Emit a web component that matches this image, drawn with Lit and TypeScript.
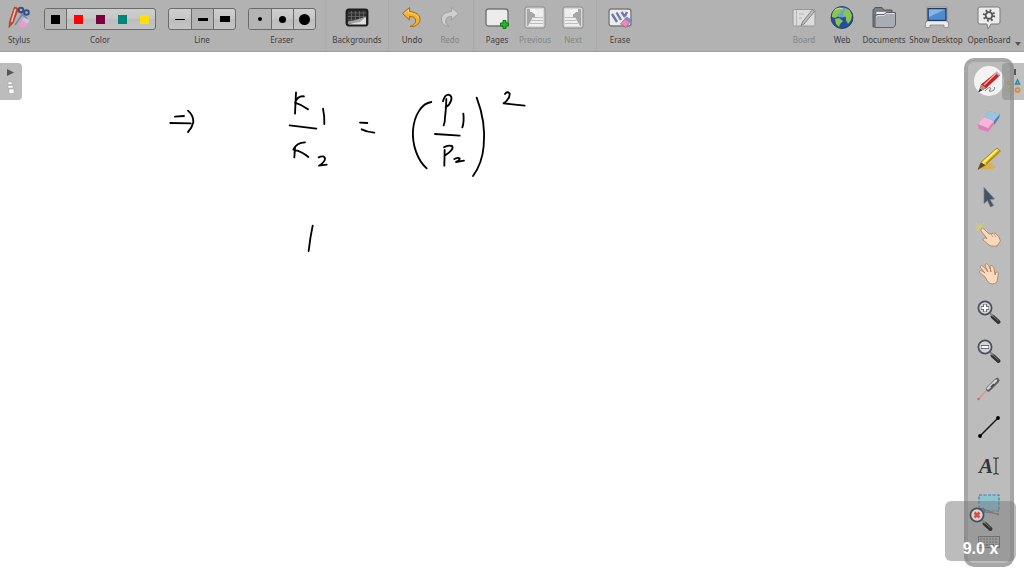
import { LitElement, html, svg, css, TemplateResult, SVGTemplateResult } from "lit";
import { customElement, property, state } from "lit/decorators.js";
import { classMap } from "lit/directives/class-map.js";
import { styleMap } from "lit/directives/style-map.js";

const pageThumb = svg`
  <rect x="2" y="1" width="20" height="21" rx="2" fill="#d8d8d8" stroke="#8a8a8a"/>
  <rect x="4" y="3" width="16" height="17" fill="#a6a6a6"/>
  <path d="M14 3H20V20H5L10 11H12V8L15 7Z" fill="#eee"/>
  <path d="M7 3H13Q17 4 14 8L11 8L9 6H7Z" fill="#f4f4f4"/>
  <path d="M10 11.500H20M8.500 14.500H20M7 17.500H20" stroke="#bcbcbc" fill="none"/>`;

const magnifier = svg`
  <path d="M15.500 16.500L21.500 22" stroke="#333" stroke-width="4" stroke-linecap="round"/>
  <path d="M13 13L16 16" stroke="#888" stroke-width="2"/>
  <path d="M15.500 15.500L21.500 21" stroke="#777"/>
  <circle cx="8" cy="8" r="6.600" fill="#d3d6d8" stroke="#4a5058" stroke-width="1.800"/>`;

const icons: Record<string, SVGTemplateResult> = {
  stylus: svg`
    <path d="M8 19L17 6M20 13L12 5" stroke="#7d8aa0" stroke-width="1.800"/>
    <circle cx="14" cy="4" r="2.300" fill="none" stroke="#34508a" stroke-width="1.900"/>
    <circle cx="19.500" cy="6.500" r="2.300" fill="none" stroke="#34508a" stroke-width="1.900"/>
    <path d="M7.500 1L11.500 2.500L6 17L2 21.500L2.500 15.500Z" fill="#d6452d" stroke="#7c3027" stroke-width=".6"/>
    <path d="M8.500 3L4.500 16" stroke="#ffc7b4" stroke-width="1.400"/>
    <path d="M12 18L17 11.500L22.500 14.500L18 21.500L13 21Z" fill="#ef9ccb"/>
    <path d="M15 14L17 11.500L22.500 14.500L20.500 17.500Z" fill="#bccbee"/>`,
  backgrounds: svg`
    <rect x="1.500" y="3.500" width="21" height="16" rx="2" fill="#303030" stroke="#1c1c1c" stroke-width="1.800"/>
    <path d="M3 7H21M3 10.500H21M3 14H21M6.500 5V18M10.500 5V18M14.500 5V18M18.500 5V18" stroke="#696969" stroke-width=".8"/>
    <path d="M3 18.500C9 17 16 14 21 11V18.500Z" fill="#dedede"/>
    <path d="M3 15.500C10 15 15 12.500 21 10.500L15 16L3 18Z" fill="#a3a3a3"/>`,
  undo: svg`<path d="M2.500 7.500L9.500 1.500V5.500C16 6 20.500 9 20 14C19.500 18.500 15 21 10 20.500C14 19 16 17 15.500 14C15 11 12.500 10.500 9.500 10.500V14Z" fill="#f5b22e" stroke="#a86c0d" stroke-linejoin="round"/>
    <path d="M4.500 7.500L8.500 4V6.700C13 7 17 8.500 18 12" fill="none" stroke="#ffd877"/>`,
  redo: svg`<path d="M20.500 7.500L13.500 1.500V5.500C7 6 3 9 3.500 14C4 18.500 7 20 11 20.500C8 18.500 7.500 17 8 14C8.500 11 11 10.500 13.500 10.500V14Z" fill="#cecece" stroke="#9e9e9e" stroke-linejoin="round"/>`,
  pages: svg`
    <rect x="1" y="3" width="22" height="17" rx="2.500" fill="#ececec" stroke="#747474" stroke-width="1.400"/>
    <path d="M17 14.500H20V17H22.500V20H20V22.500H17V20H14.500V17H17Z" transform="translate(1)" fill="#21bd20" stroke="#087b0b"/>`,
  previous: pageThumb,
  next: svg`<g transform="translate(24 0) scale(-1 1)">${pageThumb}</g>`,
  erase: svg`
    <rect x="1" y="3" width="22" height="17" rx="2.500" fill="#ededee" stroke="#7a7a7a" stroke-width="1.400"/>
    <path d="M4 8L9 16M8.500 6.500L13 14M13.500 6L17 11M19 6L17 10" fill="none" stroke="#6b7ba6" stroke-width="2.400"/>
    <path d="M12.500 18L18.500 11L23.500 14L18 21.500Z" fill="#ee88b8" stroke="#99607f" stroke-width=".7"/>
    <path d="M16.500 13.300L18.500 11L23.500 14L21.500 16.800Z" fill="#7790cf"/>`,
  board: svg`
    <rect x="1" y="3.500" width="22" height="16.500" rx="1.500" fill="#dcdcdc" stroke="#969696"/>
    <path d="M4.500 4V20M7 8H12M7 12H10" stroke="#b4b4b4"/>
    <path d="M20.500 3.500L22.500 5.500L12 18L9 19.500L10.500 16Z" fill="#bcbcbc" stroke="#858585"/>`,
  web: svg`
    <circle cx="12" cy="11.500" r="11" fill="#23509c" stroke="#22375b" stroke-width=".8"/>
    <ellipse cx="12" cy="6.500" rx="8.500" ry="5" fill="#6a9fd8"/>
    <path d="M2 9C3 4 7 1 11 2L13 4L10 5L11 7L8 8L7 11L5 12L2 11ZM15 3L19 4L22 9L21 14L18 18L16 14L16 11L13 9L14 6ZM5 13L9 12L13 15L10 18L9 21L6 18Z" fill="#8fc44a"/>
    <path d="M5 4C8 2 11 2 13 3" fill="none" stroke="#c5e69a"/>`,
  documents: svg`
    <path d="M1 21V4L3 1.500H10L12 4H20V19Z" fill="#777b82" stroke="#55585d"/>
    <path d="M4 5.500H18V18H4Z" fill="#eee" stroke="#777" stroke-width=".7"/>
    <path d="M3 21V10L5 8.500H12L14 6.500H23.500V19L21.500 21.500H3Z" fill="#a9acb2" stroke="#5f6268"/>
    <path d="M4 11L6 9.500H12.500L14.500 7.500H22.500" fill="none" stroke="#dcdde0"/>`,
  desktop: svg`
    <path d="M2 1H22V16H23.500V21.500H19V19H5V21.500H.500V16H2Z" transform="translate(1)" fill="#ececec" stroke="#888" stroke-width=".8"/>
    <rect x="4" y="2.500" width="18" height="12" fill="#4e8ace" stroke="#233b60" stroke-width="1.300"/>
    <path d="M5 3.500H21L5 11Z" fill="#86b5e8"/>`,
  openboard: svg`
    <path d="M3 1H21Q23 1 23 3V16Q23 18 21 18H14L11 23L10 18H3Q1 18 1 16V3Q1 1 3 1Z" fill="#ececec" stroke="#7b7b7b"/>
    <circle cx="12" cy="9.500" r="5" fill="none" stroke="#555" stroke-width="2.400" stroke-dasharray="1.700 2.227"/>
    <circle cx="12" cy="9.500" r="3.300" fill="none" stroke="#555" stroke-width="1.800"/>`,
  pen: svg`
    <circle cx="12" cy="12" r="15" fill="#f3f3f3"/>
    <path d="M8 22C12 17 16 18 12 22C16 23 19 20 17 18" fill="none" stroke="#777"/>
    <path d="M20 3L23 6L9 19L2 22.500L4.500 15.500Z" fill="#d51e25" stroke="#73161a" stroke-width=".6"/>
    <path d="M19 4.500L7 16" stroke="#ffb0ac" stroke-width="1.300"/>
    <path d="M4.500 15.500L9 19L2 22.500Z" fill="#a8958c"/><path d="M3.500 20L5 21.500L1 23Z" fill="#222"/>
    <path d="M19.500 2L23.500 5.500L22 7L18.500 4Z" fill="#bcbcbc"/>`,
  eraser: svg`
    <path d="M1 16L12 3L23 6L22 10L11 24L1.500 21Z" fill="#dc82b6"/>
    <path d="M1 16L7 9L17 13L11 20Z" fill="#f9b5d7"/>
    <path d="M7 9L12 3L23 6L17 13Z" fill="#94c6df"/>
    <path d="M17 13L23 6L22 10L17 17Z" fill="#5a7cb8"/>`,
  marker: svg`
    <path d="M5 22Q15 15 16 18Q16 20 12 20.500Q18 18 19 21Q16 24 4 23Z" fill="#dcae4c"/>
    <path d="M20 2L23.500 5L9 19L1 23.500L4 16Z" fill="#f2d52b" stroke="#8a6e18" stroke-width=".7"/>
    <path d="M19.500 4L6 17" stroke="#fff48c" stroke-width="1.200"/>
    <path d="M22.500 4L23.500 5L10 18L8.500 17Z" fill="#b28d1d"/>
    <path d="M4 16.500L8.500 19L1 23.500Z" fill="#57482b"/>`,
  select: svg`<path d="M7 2.500L17.500 14L13 14.500L16.500 20.500L13.500 22L10.500 15.500L7 18.500Z" fill="#485361" stroke="#737b86" stroke-width=".7"/>`,
  interact: svg`
    <path d="M3 0V8M-2 4H9M-1 0L7 8M7 0L-1 8" stroke="#d0d460"/>
    <path d="M4 6Q5 4 7 6L12 11L18 10Q22 12 23.500 18L20 23Q14 24 12 22L6 17Q6 14 10 15.500L4 8Z" fill="#f8d9be" stroke="#b08360" stroke-linejoin="round" stroke-width=".9"/>
    <path d="M14 11L16 14M17 11L19 14" stroke="#c79d7c"/>`,
  hand: svg`<path d="M8 15L2 10Q3 7 6 9.500L8 11L3 5Q4 2 7 5L11 10L8 3Q9 0 12 4L14 10L13 4Q15 2 17 6L18 13L19 10Q22 9 21 14L20 20Q15 24 11 20Z" fill="#f8dac0" stroke="#b08360" stroke-linejoin="round" stroke-width=".9"/>`,
  zoomIn: svg`${magnifier}<path d="M8 4V12M4 8H12" stroke="#4a5058" stroke-width="3.600"/><path d="M8 4.500V11.500M4.500 8H11.500" stroke="#fff" stroke-width="2.200"/>`,
  zoomOut: svg`${magnifier}<path d="M4 8H12" stroke="#4a5058" stroke-width="3.600"/><path d="M4.500 8H11.500" stroke="#fff" stroke-width="2"/>`,
  zoomReset: svg`${magnifier}<path d="M5.500 5.500L10.500 10.500M10.500 5.500L5.500 10.500" stroke="#e5483d" stroke-width="2.600"/>`,
  laser: svg`
    <path d="M1.500 21L10 12" stroke="#e2908c" stroke-width="1.600"/><circle cx="1.500" cy="21" r="1.200" fill="#dc5c58"/>
    <path d="M11.500 11L20 2.500" stroke="#606060" stroke-width="5" stroke-linecap="round"/>
    <path d="M11 10.500L19 2.500" stroke="#d8d8d8" stroke-width="2.400" stroke-linecap="round"/>
    <path d="M14 9L17 6" stroke="#444" stroke-width="1.600"/>`,
  line: svg`<path d="M3 20L21 2" stroke="#111" stroke-width="1.500"/><circle cx="3" cy="20" r="1.900"/><circle cx="21" cy="2" r="1.900"/>`,
  text: svg`<text x="2" y="18" font-family="Liberation Serif, serif" font-size="21" font-style="italic" font-weight="bold" fill="#333">A</text>
    <path d="M16 3H18L19 4L20 3H22M19 4V18M16 19H18L19 18L20 19H22" fill="none" stroke="#333" stroke-width="1.200"/>`,
  capture: svg`
    <rect x="2" y="2" width="20" height="16" fill="#8cc5cd" stroke="#4a78ab" stroke-width="1.200" stroke-dasharray="3 1.500"/>
    <path d="M2 18L22 21M6 16L22 22" stroke="#6f7984" stroke-width="1.200"/>
    <circle cx="5" cy="18" r="2.500" fill="none" stroke="#466ca2" stroke-width="1.400"/>`,
  keyboard: svg`
    <rect x="1.500" y="4.500" width="21" height="11" fill="#b5b5b5" stroke="#666"/>
    <path d="M3 7H21M3 10H21M3 13H21" stroke="#666" stroke-dasharray="2 1"/>
    <path d="M7 13H17" stroke="#666"/>`,
};

const glyph = (name: string): TemplateResult =>
  html`<svg class="glyph" viewBox="0 0 24 24" aria-hidden="true">${icons[name]}</svg>`;

@customElement("board-action")
class BoardAction extends LitElement {
  @property() icon = "";
  @property() label = "";
  @property({ type: Boolean }) disabled = false;

  static styles = css`
    :host { display: block; }
    .action {
      display: grid; grid-template-rows: 24px 12px; row-gap: 4px; justify-items: center;
      width: 100%; padding: 6px 0 0; border: 0; background: none; color: #3e3e3e;
      font: 8px/12px "Noto Sans", "Open Sans", sans-serif; white-space: nowrap;
    }
    .action:disabled { color: #858585; }
    .glyph { width: 24px; height: 24px; overflow: visible; }
  `;

  render() {
    return html`<button class="action" ?disabled=${this.disabled}>${glyph(this.icon)}<span>${this.label}</span></button>`;
  }
}

interface Mark { name: string; width: number; height: number; color: string; round?: boolean; }

@customElement("choice-strip")
class ChoiceStrip extends LitElement {
  @property() label = "";
  @property({ attribute: false }) marks: Mark[] = [];
  @property({ type: Number }) selected = -1;
  @property({ type: Boolean }) divided = false;

  static styles = css`
    :host { display: block; }
    .group {
      display: grid; grid-template-rows: 22px 12px; row-gap: 4px; justify-items: center;
      padding-top: 8px; color: #3e3e3e;
      font: 8px/12px "Noto Sans", "Open Sans", sans-serif;
    }
    .strip {
      display: flex; box-sizing: border-box; border: 1px solid #6b6b6b; border-radius: 3px;
      background: linear-gradient(#cfcfcf, #c6c6c6 50%, #bcbcbc 50%, #c5c5c5); overflow: hidden;
    }
    .choice {
      display: grid; place-items: center; box-sizing: border-box; width: 22px; height: 20px;
      padding: 0; border: 0; background: none;
    }
    .divided .choice + .choice { border-left: 1px solid #6b6b6b; }
    .choice.on { background: #b4b4b4; }
    .plain .choice.on { border-right: 1px solid #6b6b6b; }
    .round { border-radius: 50%; }
  `;

  render() {
    return html`<div class="group" role="group" aria-label=${this.label}>
      <div class=${classMap({ strip: true, divided: this.divided, plain: !this.divided })}>
        ${this.marks.map((m, i) => html`<button
          class=${classMap({ choice: true, on: i === this.selected })}
          aria-label=${m.name} aria-pressed=${i === this.selected}
          @click=${() => (this.selected = i)}><span class=${classMap({ round: !!m.round })}
          style=${styleMap({ width: `${m.width}px`, height: `${m.height}px`, background: m.color })}></span></button>`)}
      </div>
      <span>${this.label}</span>
    </div>`;
  }
}

const colors: Mark[] = [
  ["Black", "#000"], ["Red", "#f00"], ["Plum", "#7d003e"], ["Teal", "#00857a"], ["Yellow", "#ffdf00"],
].map(([name, color]) => ({ name, color, width: 9, height: 9 }));
const lines: Mark[] = [
  { name: "Fine", width: 10, height: 1, color: "#000" },
  { name: "Medium", width: 10, height: 3, color: "#000" },
  { name: "Strong", width: 10, height: 6, color: "#000" },
];
const erasers: Mark[] = [
  { name: "Small", width: 4, height: 4, color: "#000", round: true },
  { name: "Medium", width: 7, height: 7, color: "#000", round: true },
  { name: "Large", width: 11, height: 11, color: "#000", round: true },
];

const tools: [string, string][] = [
  ["pen", "Pen"], ["eraser", "Eraser"], ["marker", "Highlighter"], ["select", "Select"],
  ["interact", "Interact"], ["hand", "Scroll page"], ["zoomIn", "Zoom in"], ["zoomOut", "Zoom out"],
  ["laser", "Laser pointer"], ["line", "Draw line"], ["text", "Write text"], ["capture", "Capture"],
  ["keyboard", "Virtual keyboard"],
];

@customElement("app-root")
class AppRoot extends LitElement {
  @state() private tool = "pen";

  static styles = css`
    :host {
      display: flex; flex-direction: column; height: 100vh; overflow: hidden;
      background: #fff; font-family: "Noto Sans", "Open Sans", sans-serif;
    }
    .toolbar {
      display: flex; flex: none; box-sizing: border-box; height: 52px;
      background: #b2b2b2; border-bottom: 1px solid #9c9c9c;
    }
    .section { display: flex; padding: 0 4px; border-right: 1px solid #ababab; }
    .section.first { padding: 0 3px 0 0; }
    .section.last { border: 0; }
    .modes { display: flex; margin-left: auto; }
    .w38 { width: 38px; }
    .w46 { width: 46px; }
    .w48 { width: 48px; }
    .w54 { width: 54px; }
    .w58 { width: 58px; }
    .w80 { width: 80px; }
    .w124 { width: 124px; }
    .more { align-self: end; width: 11px; height: 14px; padding: 0; border: 0; background: none; }
    .more svg { display: block; width: 8px; height: 5px; margin-left: 1px; }
    .board { position: relative; flex: 1; min-height: 0; }
    .ink { display: block; width: 100%; height: 100%; }
    .glyph { width: 24px; height: 24px; overflow: visible; }
    .tab {
      position: absolute; top: 11px; box-sizing: border-box; width: 22px; height: 37px;
      padding: 0; border: 0; background: #bcbcbc;
    }
    .tab svg { display: block; width: 22px; height: 37px; }
    .tab.left { left: 0; border-radius: 0 4px 4px 0; }
    .tab.right { right: 0; border-radius: 4px 0 0 4px; background: rgba(130, 130, 130, 0.5); }
    .palette {
      position: absolute; top: 6px; bottom: 9px; right: 10px; box-sizing: border-box; width: 50px;
      display: flex; flex-direction: column; justify-content: space-around; align-items: center;
      border: 4px solid #a6a6a6; border-radius: 10px; background: #bcbcbc;
    }
    .tool { display: block; height: 24px; padding: 0; border: 0; background: none; }
    .zoom {
      position: absolute; right: 8px; bottom: 15px; box-sizing: border-box; width: 71px; height: 60px;
      display: grid; grid-template-rows: 32px 20px; justify-items: center; align-content: start;
      padding-top: 6px; border-radius: 6px; background: rgba(122, 122, 122, 0.5);
      color: #fff; font: bold 16px/20px "Liberation Sans", Arial, sans-serif;
    }
  `;

  private ink() {
    return html`<svg class="ink" role="img" aria-label="K1 over K2 equals P1 over P2, squared">
      <g transform="translate(150 28) scale(.33333)" fill="none" stroke="#000" stroke-width="5.500" stroke-linecap="round" stroke-linejoin="round">
        <path d="M75 110L102 108M61 129L122 130M114 92Q131 107 130 127Q126 144 114 156"/>
        <path d="M438 37L435 101M462 49Q442 47 435 68Q455 74 474 88M519 86Q524 108 523 132"/>
        <path d="M419 136L499 146" />
        <path d="M435 202L433 232M465 187Q440 187 430 209Q455 214 475 231M506 232Q522 225 525 235Q526 245 507 257L530 254"/>
        <path d="M630 128L652 129M635 148Q650 156 673 158"/>
        <path d="M844 66C815 70 793 105 789 150C786 195 803 242 830 265"/>
        <path d="M889 57Q888 90 885 112Q885 128 881 136M879 64Q884 44 896 44Q908 48 903 62Q899 75 887 82M940 101Q943 125 937 142"/>
        <path d="M855 162L929 167"/>
        <path d="M884 210L883 257M882 202Q893 194 906 198Q914 207 887 225M913 237Q925 231 929 235Q929 243 918 246Q930 244 942 242"/>
        <path d="M980 53C1000 105 1006 150 1001 198C998 238 985 266 969 288"/>
        <path d="M1065 42Q1072 32 1079 41Q1080 56 1061 70L1124 77"/>
        <path d="M488 437Q480 475 476 513"/>
      </g>
    </svg>`;
  }

  render() {
    return html`
      <header class="toolbar">
        <div class="section first">
          <board-action class="w38" icon="stylus" label="Stylus"></board-action>
          <choice-strip class="w124" label="Color" .marks=${colors} .selected=${0}></choice-strip>
          <choice-strip class="w80" label="Line" divided .marks=${lines} .selected=${1}></choice-strip>
          <choice-strip class="w80" label="Eraser" divided .marks=${erasers} .selected=${0}></choice-strip>
        </div>
        <div class="section"><board-action class="w54" icon="backgrounds" label="Backgrounds"></board-action></div>
        <div class="section">
          <board-action class="w38" icon="undo" label="Undo"></board-action>
          <board-action class="w38" icon="redo" label="Redo" disabled></board-action>
        </div>
        <div class="section">
          <board-action class="w38" icon="pages" label="Pages"></board-action>
          <board-action class="w38" icon="previous" label="Previous" disabled></board-action>
          <board-action class="w38" icon="next" label="Next" disabled></board-action>
        </div>
        <div class="section last"><board-action class="w38" icon="erase" label="Erase"></board-action></div>
        <nav class="modes">
          <board-action class="w38" icon="board" label="Board" disabled></board-action>
          <board-action class="w38" icon="web" label="Web"></board-action>
          <board-action class="w46" icon="documents" label="Documents"></board-action>
          <board-action class="w58" icon="desktop" label="Show Desktop"></board-action>
          <board-action class="w48" icon="openboard" label="OpenBoard"></board-action>
          <button class="more" aria-label="More"><svg viewBox="0 0 8 5"><path d="M1 0H7L4 4Z" fill="#555"/></svg></button>
        </nav>
      </header>
      <main class="board">
        ${this.ink()}
        <button class="tab left" aria-label="Open page list"><svg viewBox="0 0 22 37">
          <path d="M7 6L14 9.500L7 13Z" fill="#555"/>
          <path d="M8 19H12V21.500H8ZM8 22.500H13V25H8ZM9 26H14V30.500H9Z" fill="#fff" stroke="#9d9d9d" stroke-width=".5"/>
        </svg></button>
        <div class="palette" role="toolbar" aria-label="Drawing tools">
          ${tools.map(([icon, name]) => html`<button class="tool" aria-label=${name}
            aria-pressed=${icon === this.tool} @click=${() => (this.tool = icon)}>${glyph(icon)}</button>`)}
        </div>
        <button class="tab right" aria-label="Open library"><svg viewBox="0 0 22 37">
          <path d="M12 6H14V12H12Z" fill="#555"/>
          <path d="M13.500 21L15.500 17L17.500 21Z" fill="none" stroke="#2b87a5" stroke-width="1.500"/>
          <circle cx="15.500" cy="27" r="2" fill="none" stroke="#e8832f" stroke-width="1.700"/>
          <circle cx="7" cy="20" r="1.500" fill="none" stroke="#aa925b"/><circle cx="7" cy="27" r="1.500" fill="none" stroke="#a39c66"/>
        </svg></button>
        <div class="zoom" role="status">${glyph("zoomReset")}<span>9.0 x</span></div>
      </main>`;
  }
}
